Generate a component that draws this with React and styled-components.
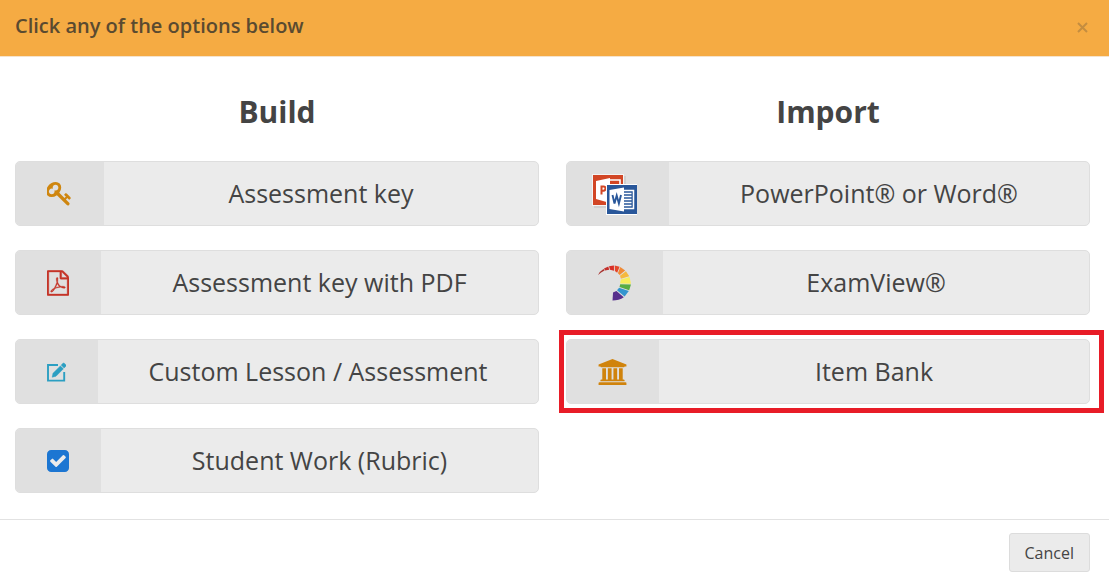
import React from "react";
import styled, { createGlobalStyle } from "styled-components";

const Global = createGlobalStyle`
  * { box-sizing: border-box; }
  body { margin: 0; background: #fff; color: #444; font-family: "Open Sans", "Noto Sans", sans-serif; }
  button { font: inherit; color: inherit; cursor: pointer; }
`;

const Header = styled.header`
  display: flex;
  align-items: center;
  justify-content: space-between;
  height: 57px;
  padding: 0 19px 4px 15px;
  background: #f5ab43;
  border-bottom: 1px solid #f5e3cc;
`;
const Title = styled.h1`
  margin: 0;
  font-size: 20px;
  line-height: 28px;
  font-weight: 600;
  color: #5a4a30;
`;
const Close = styled.button`
  display: flex;
  padding: 4px 2px 2px;
  border: 0;
  background: none;
`;
const Body = styled.main`
  display: grid;
  grid-template-columns: 1fr 1fr;
  gap: 27px;
  padding: 33px 19px 26px 15px;
`;
const Column = styled.section`
  display: flex;
  flex-direction: column;
  gap: 24px;
`;
const Heading = styled.h2`
  margin: 0 0 3px;
  font-size: 30px;
  line-height: 44px;
  font-weight: 700;
  text-align: center;
`;
const Option = styled.button`
  position: relative;
  display: flex;
  width: 100%;
  height: 65px;
  padding: 0;
  border: 1px solid #dedede;
  border-radius: 5px;
  background: #ebebeb;
  font-size: 25px;
  line-height: 34px;
`;
const IconCell = styled.span`
  display: flex;
  align-items: center;
  align-self: stretch;
  padding: 0 32px 0 ${(p) => (p.$wide ? 25 : 31)}px;
  background: #e0e0e0;
  color: ${(p) => p.$color};
  border-radius: 4px 0 0 4px;
  svg { display: block; }
`;
const Label = styled.span`
  flex: 1;
  align-self: center;
  padding-bottom: 2px;
  text-align: center;
`;
const Highlight = styled.span`
  position: absolute;
  inset: -10px -15px -10px -8px;
  border: 5px solid #e81c27;
  pointer-events: none;
`;
const Footer = styled.footer`
  display: flex;
  justify-content: flex-end;
  padding: 13px 19px 10px;
  border-top: 1px solid #e2e2e2;
`;
const Cancel = styled.button`
  height: 39px;
  padding: 0 15px;
  border: 1px solid #dcdcdc;
  border-radius: 3px;
  background: #ebebeb;
  font-size: 16px;
  line-height: 24px;
`;

const KeyIcon = () => (
  <svg width="25" height="25" viewBox="64 64 1690 1690" fill="currentColor" aria-hidden="true">
    <path d="M832 512q0-80-56-136t-136-56-136 56-56 136q0 42 19 83-41-19-83-19-80 0-136 56t-56 136 56 136 136 56 136-56 56-136q0-42-19-83 41 19 83 19 80 0 136-56t56-136zm851 704q0 17-49 66t-66 49q-9 0-28.5-16t-36.5-33-38.5-40-24.5-26l-96 96 220 220q28 28 28 68 0 42-39 81t-81 39q-40 0-68-28l-671-671q-176 131-365 131-163 0-265.5-102.5t-102.5-265.5q0-160 95-313t248-248 313-95q163 0 265.5 102.5t102.5 265.5q0 189-131 365l355 355 96-96q-3-3-26-24.5t-40-38.5-33-36.5-16-28.5q0-17 49-66t66-49q13 0 23 10 6 6 46 44.5t82 79.5 86.5 86 73 78 28.5 41z" />
  </svg>
);
const PdfIcon = () => (
  <svg width="22" height="26" viewBox="128 0 1536 1792" fill="currentColor" stroke="currentColor" strokeWidth="24" aria-hidden="true">
    <path d="M1596 380q28 28 48 76t20 88v1152q0 40-28 68t-68 28h-1344q-40 0-68-28t-28-68v-1600q0-40 28-68t68-28h896q40 0 88 20t76 48zm-444-244v376h376q-10-29-22-41l-313-313q-12-12-41-22zm384 1528v-1024h-416q-40 0-68-28t-28-68v-416h-768v1536h1280zm-514-593q33 26 84 56 59-7 117-7 147 0 177 49 16 22 2 52 0 1-1 2l-2 2v1q-6 38-71 38-48 0-115-20t-130-53q-221 24-392 83-153 262-242 262-15 0-28-7l-24-12q-1-1-6-5-10-10-6-36 9-40 56-91.5t132-96.5q14-9 23 6 2 2 2 4 52-85 107-197 68-136 104-262-24-82-30.5-159.5t6.5-127.5q11-40 42-40h22q23 0 35 15 18 21 9 68-2 6-4 8 1 3 1 8v30q-2 123-14 192 55 164 146 238zm-576 411q52-24 137-158-51 40-87.5 84t-49.5 74zm398-920q-15 42-2 132 1-7 7-44 0-3 7-43 1-4 4-8-1-1-1-2-1-2-1-3-1-22-13-36 0 1-1 2v2zm-124 661q135-54 284-81-2-1-13-9.5t-16-13.5q-76-67-127-176-27 86-83 197-30 56-45 83zm646-16q-24-24-140-24 76 28 124 28 14 0 18-1 0-1-2-3z" />
  </svg>
);
const EditIcon = () => (
  <svg width="19" height="20" viewBox="0 0 19 20" aria-hidden="true">
    <path d="M11 3H1V18.6H17.2V10" fill="none" stroke="currentColor" strokeWidth="1.9" />
    <path d="M5.2 15.2 6 11.3 13.4 3.9 16.4 6.8 9 14.2ZM14.2 3.1 16 1.3Q16.7.7 17.5 1.4L18.8 2.7Q19.4 3.5 18.8 4.2L17.1 6Z" fill="currentColor" stroke="currentColor" strokeWidth=".5" />
  </svg>
);
const CheckIcon = () => (
  <svg width="22" height="22" viewBox="128 128 1536 1536" aria-hidden="true">
    <rect x="256" y="256" width="1280" height="1280" fill="#ebebeb" />
    <path fill="currentColor" d="M813 1299l614-614q19-19 19-45t-19-45l-102-102q-19-19-45-19t-45 19l-467 467-211-211q-19-19-45-19t-45 19l-102 102q-19 19-19 45t19 45l358 358q19 19 45 19t45-19zm851-883v960q0 119-84.5 203.5t-203.5 84.5h-960q-119 0-203.5-84.5t-84.5-203.5v-960q0-119 84.5-203.5t203.5-84.5h960q119 0 203.5 84.5t84.5 203.5z" />
  </svg>
);
const BankIcon = () => (
  <svg width="29" height="26" viewBox="-128 0 1920 1792" fill="currentColor" aria-hidden="true">
    <path d="M832 0l960 384v128h-128q0 26-20.5 45t-48.5 19h-1526q-28 0-48.5-19t-20.5-45h-128v-128zm-704 640h256v768h128v-768h256v768h128v-768h256v768h128v-768h256v768h59q28 0 48.5 19t20.5 45v64h-1664v-64q0-26 20.5-45t48.5-19h59v-768zm1595 960q28 0 48.5 19t20.5 45v128h-1920v-128q0-26 20.5-45t48.5-19h1782z" />
  </svg>
);
const OfficeIcon = () => (
  <svg width="45" height="42" viewBox="0 0 45 42" aria-hidden="true">
    <path d="M2 3H34V35H2Z" fill="#c4c4c4" opacity=".6" />
    <path d="M0 1H32V33H0Z" fill="#f4f4f4" />
    <path d="M1 2H31V32H1Z" fill="#d24625" />
    <path d="M17 7H28V27H17Z" fill="none" stroke="#fff" strokeWidth="1.6" />
    <path d="M4 8 18 5V30L4 26Z" fill="#fff" />
    <path d="M9.5 21.500V13.500H11.5Q13.500 13.500 13.500 15.500T11.5 17.700H9.500" fill="none" stroke="#d24625" strokeWidth="2" />
    <path d="M14 11H45V42H14Z" fill="#fff" />
    <path d="M15 12H45V41H15Z" fill="#29579a" />
    <path d="M30 17.500H41.500V35.500H30Z" fill="#29579a" stroke="#fff" strokeWidth="1.500" />
    <path d="M31 20.500H39.500M31 23.500H39.500M31 26.500H39.500M31 29.500H39.500M31 32.500H39.500" stroke="#fff" strokeWidth="1.300" />
    <path d="M17.500 17 32 14.500V38.500L17.500 36Z" fill="#fff" />
    <path d="M20.500 22 22.500 30.500 24.700 22.500 26.900 30.500 29 22" fill="none" stroke="#29579a" strokeWidth="1.900" />
  </svg>
);
const ArcIcon = () => (
  <svg width="33" height="36" viewBox="0 0 33 36" aria-hidden="true">
    <path d="M0 10Q2 6 5.500 4L6.500 5.500Q3 7 0 10Z" fill="#a8322f" />
    <path d="M6 3.500 10.300 1.500 11.200 4.700 7 5.500Z" fill="#c4302c" />
    <path d="M11 1.200 15.900.6 16 5.700 12 4.800Z" fill="#d92f27" />
    <path d="M16.700.6 21.600 1.700 19.200 7.700 16.900 6Z" fill="#e4482a" />
    <path d="M22.300 2 27.200 5.500 21.700 10 19.900 8.200Z" fill="#f08a35" />
    <path d="M27.900 6.200 31.300 11.300 22.900 13.700 22 10.700Z" fill="#f5b83d" />
    <path d="M31.600 12.100 33 18.700 22 18.400 22.900 14.500Z" fill="#f7ee5a" />
    <path d="M33 19.400 31.200 25.200 21.500 22 22.200 19.200Z" fill="#58ad43" />
    <path d="M30.800 26 26.600 31.600 19 25.300 21.100 22.800Z" fill="#3495cf" />
    <path d="M25.800 32.200Q21 35.500 14.500 35.500L15 27.500 18.400 25.900Z" fill="#57308d" />
  </svg>
);

const build = [
  { label: "Assessment key", color: "#cf860f", Icon: KeyIcon },
  { label: "Assessment key with PDF", color: "#c53428", Icon: PdfIcon },
  { label: "Custom Lesson / Assessment", color: "#2c9fc2", Icon: EditIcon },
  { label: "Student Work (Rubric)", color: "#1c76d2", Icon: CheckIcon },
];
const imports = [
  { label: "PowerPoint® or Word®", Icon: OfficeIcon, wide: true },
  { label: "ExamView®", Icon: ArcIcon },
  { label: "Item Bank", color: "#d0830c", Icon: BankIcon, highlighted: true },
];

const OptionColumn = ({ title, items }) => (
  <Column>
    <Heading>{title}</Heading>
    {items.map(({ label, color, Icon, wide, highlighted }) => (
      <Option key={label} type="button">
        <IconCell $color={color} $wide={wide}><Icon /></IconCell>
        <Label>{label}</Label>
        {highlighted && <Highlight />}
      </Option>
    ))}
  </Column>
);

export default function App() {
  return (
    <>
      <Global />
      <Header>
        <Title>Click any of the options below</Title>
        <Close type="button" aria-label="Close">
          <svg width="11" height="11" viewBox="0 0 11 11" aria-hidden="true">
            <path d="M1 1 10 10M10 1 1 10" stroke="#c48d40" strokeWidth="2" />
          </svg>
        </Close>
      </Header>
      <Body>
        <OptionColumn title="Build" items={build} />
        <OptionColumn title="Import" items={imports} />
      </Body>
      <Footer>
        <Cancel type="button">Cancel</Cancel>
      </Footer>
    </>
  );
}
